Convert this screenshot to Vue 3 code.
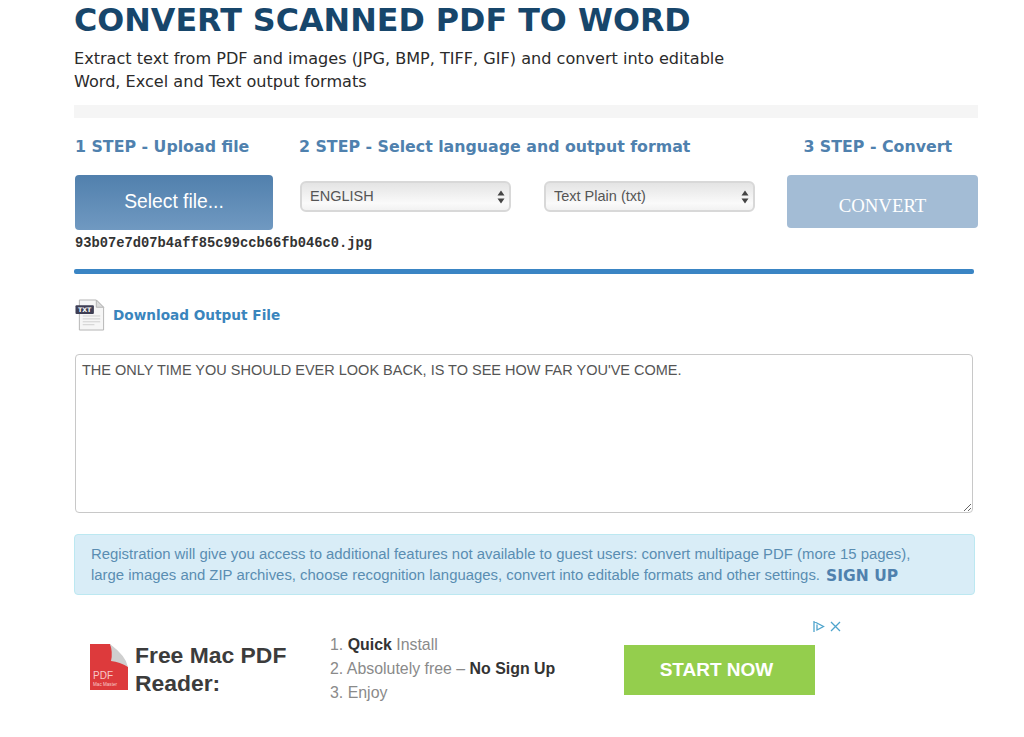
<script setup>
</script>

<template>
  <div class="page">
    <h1 class="title">CONVERT SCANNED PDF TO WORD</h1>
    <p class="lead">Extract text from PDF and images (JPG, BMP, TIFF, GIF) and convert into editable<br>Word, Excel and Text output formats</p>
    <div class="strip"></div>

    <div class="steps">
      <section class="col col-one">
        <h2 class="step">1 STEP - Upload file</h2>
        <button class="select-file" type="button">Select file...</button>
        <div class="filename">93b07e7d07b4aff85c99ccb66fb046c0.jpg</div>
      </section>
      <section class="col col-two">
        <h2 class="step">2 STEP - Select language and output format</h2>
        <div class="selects">
          <div class="select-wrap">
            <select class="select"><option>ENGLISH</option></select>
            <svg class="arrows" width="8" height="14" viewBox="0 0 8 14"><path d="M4 0.5 7.5 5.5H0.5zM4 13.5 0.5 8.5H7.5z" fill="#444"/></svg>
          </div>
          <div class="select-wrap">
            <select class="select"><option>Text Plain (txt)</option></select>
            <svg class="arrows" width="8" height="14" viewBox="0 0 8 14"><path d="M4 0.5 7.5 5.5H0.5zM4 13.5 0.5 8.5H7.5z" fill="#444"/></svg>
          </div>
        </div>
      </section>
      <section class="col col-three">
        <h2 class="step">3 STEP - Convert</h2>
        <button class="convert" type="button">CONVERT</button>
      </section>
    </div>

    <div class="progress"></div>

    <div class="download">
      <svg class="txt-icon" width="31" height="34" viewBox="0 0 32 34">
        <path d="M4.5 1.5H22L29.5 9V32.5H4.5z" fill="#f6f6f6" stroke="#b5b5b5"/>
        <path d="M22 1.5V9H29.5z" fill="#dcdcdc" stroke="#b5b5b5"/>
        <path d="M8 18H26M8 21H26M8 24H26M8 27H20" stroke="#cfcfcf" stroke-width="1"/>
        <rect x="0.5" y="7" width="19" height="9" rx="1" fill="#3f3f55"/>
        <text x="10" y="14" text-anchor="middle" class="txt-label">TXT</text>
      </svg>
      <a class="download-link">Download Output File</a>
    </div>

    <textarea class="output" readonly>THE ONLY TIME YOU SHOULD EVER LOOK BACK, IS TO SEE HOW FAR YOU'VE COME.</textarea>

    <div class="notice">
      Registration will give you access to additional features not available to guest users: convert multipage PDF (more 15 pages),<br>
      large images and ZIP archives, choose recognition languages, convert into editable formats and other settings. <b class="signup">SIGN UP</b>
    </div>

    <div class="ad">
      <div class="ad-marks">
        <svg width="13" height="13" viewBox="0 0 13 13"><path d="M2 1V12M2 1.5 11.5 6.5 5 10V4.5" fill="none" stroke="#4ea4cc" stroke-width="1.3"/></svg>
        <svg width="11" height="11" viewBox="0 0 11 11"><path d="M1 1 10 10M10 1 1 10" stroke="#4ea4cc" stroke-width="1.3"/></svg>
      </div>
      <div class="ad-brand">
        <svg class="pdf-logo" width="38" height="46" viewBox="0 0 38 46">
          <path d="M0 0H20Q24 10 38 23V46H0z" fill="#dd3a3c"/>
          <path d="M20 0Q36 12 38 23Q30 18 21 17Q23 8 20 0z" fill="#cfcfcf"/>
          <text x="3" y="35" class="pdf-word">PDF</text>
          <text x="3" y="42" class="pdf-sub">Mac Master</text>
        </svg>
        <div class="ad-name">Free Mac PDF<br>Reader:</div>
      </div>
      <ol class="ad-list">
        <li>1. <b>Quick</b> Install</li>
        <li>2. Absolutely free – <b>No Sign Up</b></li>
        <li>3. Enjoy</li>
      </ol>
      <div class="ad-cta">START NOW</div>
    </div>
  </div>
</template>

<style>
html, body { background: #fff; }
</style>

<style scoped>
.page {
  box-sizing: border-box;
  width: 1024px;
  height: 737px;
  overflow: hidden;
  padding: 0 46px 0 74px;
  font-family: "Liberation Sans", Arial, sans-serif;
  color: #333;
}
.title {
  margin: 0;
  padding-top: 2px;
  height: 38px;
  font: bold 31.75px/36px "DejaVu Sans", Verdana, sans-serif;
  color: #17466b;
  white-space: nowrap;
}
.lead {
  margin: 7px 0 0;
  font: 16.1px/23px "DejaVu Sans", Verdana, sans-serif;
  color: #2b2b2b;
  white-space: nowrap;
}
.strip {
  margin-top: 12px;
  height: 13px;
  background: #f5f5f5;
}
.steps {
  display: flex;
  margin-top: 19px;
  height: 132px;
}
.col { position: relative; }
.col-one { width: 225px; padding-left: 1px; box-sizing: border-box; }
.col-two { width: 503px; }
.col-three { width: 176px; display: flex; flex-direction: column; align-items: flex-end; }
.step {
  margin: 0;
  font: bold 15.8px/20px "DejaVu Sans", Verdana, sans-serif;
  color: #4f81ae;
  white-space: nowrap;
}
.col-three .step { margin-right: 26px; }
.select-file {
  display: block;
  margin-top: 18px;
  width: 198px;
  height: 55px;
  padding: 0 0 2px;
  border: 0;
  border-radius: 4px;
  background: linear-gradient(#5180ad, #7099c1);
  color: #fff;
  font: 19.3px "Liberation Sans", Arial, sans-serif;
}
.filename {
  margin-top: 6px;
  font: bold 13.75px/16px "Liberation Mono", "Courier New", monospace;
  color: #333;
  white-space: nowrap;
}
.selects {
  display: flex;
  gap: 33px;
  margin-top: 24px;
  padding-left: 1px;
}
.select-wrap { position: relative; width: 211px; height: 31px; }
.select {
  appearance: none;
  box-sizing: border-box;
  width: 100%;
  height: 100%;
  padding: 0 24px 2px 8px;
  border: 2px solid #d8d8d8;
  border-radius: 6px;
  background: linear-gradient(#e4e4e4, #fafafa 75%, #f2f2f2);
  color: #555;
  font: 14.5px "Liberation Sans", Arial, sans-serif;
}
.arrows { position: absolute; right: 6px; top: 9px; }
.convert {
  display: block;
  margin-top: 18px;
  width: 191px;
  height: 53px;
  padding: 8px 0 0;
  border: 0;
  border-radius: 4px;
  background: #a3bcd5;
  color: #fff;
  font: 18.8px "Liberation Serif", "Times New Roman", serif;
}
.progress {
  width: 900px;
  height: 5px;
  border-radius: 2px;
  background: #3a85c4;
}
.download {
  display: flex;
  align-items: center;
  gap: 7px;
  height: 36px;
  margin: 23px 0 0 1px;
}
.txt-icon { flex: none; }
.txt-label {
  font: bold 6.5px "DejaVu Sans", sans-serif;
  fill: #fff;
}
.download-link {
  font: bold 13.65px/20px "DejaVu Sans", Verdana, sans-serif;
  color: #3a85bd;
  white-space: nowrap;
}
.output {
  display: block;
  box-sizing: border-box;
  width: 898px;
  height: 159px;
  margin: 21px 0 0 1px;
  padding: 5px 6px;
  border: 1px solid #c8c8c8;
  border-radius: 4px;
  color: #555;
  background: #fff;
  font: 14.5px/20px "Liberation Sans", Arial, sans-serif;
  outline: none;
}
.notice {
  box-sizing: border-box;
  width: 901px;
  height: 61px;
  margin-top: 21px;
  padding: 9px 16px;
  border: 1px solid #bce8f1;
  border-radius: 4px;
  background: #d9edf7;
  color: #5a8db2;
  font: 14.9px/21px "Liberation Sans", Arial, sans-serif;
  white-space: nowrap;
}
.signup {
  margin-left: 2px;
  vertical-align: -1px;
  font: bold 15.5px/21px "DejaVu Sans", Verdana, sans-serif;
  color: #4f81ae;
}
.ad {
  position: relative;
  display: flex;
  align-items: center;
  box-sizing: border-box;
  height: 94px;
  margin-top: 25px;
  padding: 4px 0 0 16px;
}
.ad-marks {
  position: absolute;
  left: 738px;
  top: 0;
  display: flex;
  align-items: center;
  gap: 5px;
}
.ad-brand { display: flex; align-items: center; gap: 7px; width: 240px; }
.pdf-logo { flex: none; margin-top: -4px; }
.pdf-word { font: 10px "Liberation Sans", sans-serif; fill: #f7c9c9; }
.pdf-sub { font: 4.6px "Liberation Sans", sans-serif; fill: #f7c9c9; }
.ad-name {
  font: bold 22.9px/28px "Liberation Sans", Arial, sans-serif;
  color: #3c3c3c;
  white-space: nowrap;
}
.ad-list {
  list-style: none;
  width: 294px;
  margin: 0;
  padding: 0;
  font: 15.9px/24px "Liberation Sans", Arial, sans-serif;
  color: #8a8a8a;
  white-space: nowrap;
}
.ad-list b { color: #333; }
.ad-cta {
  display: flex;
  align-items: center;
  justify-content: center;
  box-sizing: border-box;
  width: 191px;
  height: 50px;
  margin-top: 2px;
  padding-right: 6px;
  background: #94ce4d;
  color: #fff;
  font: bold 19px "Liberation Sans", Arial, sans-serif;
}
</style>
